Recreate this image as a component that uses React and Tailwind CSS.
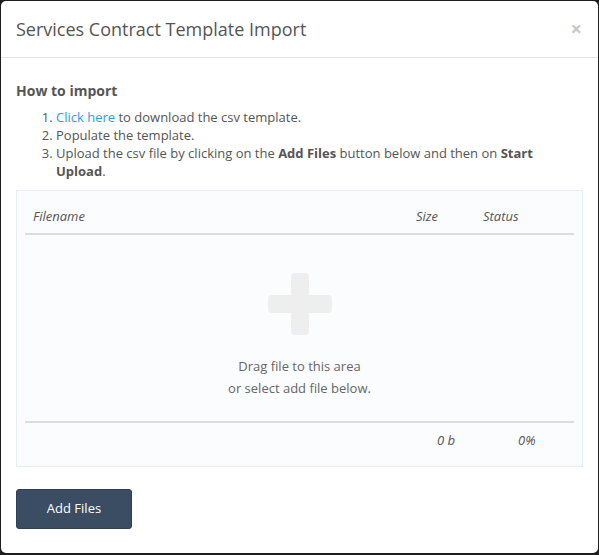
import React from 'react';

const FONT = { fontFamily: '"Open Sans", "Liberation Sans", sans-serif' };

function PlusGlyph() {
  return (
    <svg width="64" height="62" viewBox="0 0 64 62" className="block">
      <rect x="23" y="0" width="18" height="62" rx="4" fill="#eeeeee" />
      <rect x="0" y="22" width="64" height="18" rx="4" fill="#eeeeee" />
    </svg>
  );
}

export default function App() {
  return (
    <div className="h-[555px] w-[599px] bg-[#1e1e1e] pb-[2px] pl-[1px] pr-[1px] pt-[1px]" style={FONT}>
      <div className="flex h-full flex-col rounded-[5px] bg-white">
        {/* header */}
        <div className="flex h-[57px] items-center justify-between border-b border-[#e5e5e5] px-[15px]">
          <h3 className="text-[18px] leading-[26px] text-[#555]">Services Contract Template Import</h3>
          <button className="mr-[1px] text-[20px] font-bold leading-none text-[#c8c8c8]">×</button>
        </div>

        {/* body */}
        <div className="px-[15px] pt-[15px]">
          <h4 className="mt-[8px] text-[14px] font-bold leading-[20px] text-[#555]">How to import</h4>
          <ol className="mt-[7px] list-decimal pl-[40px] text-[13px] leading-[18px] text-[#555]">
            <li>
              <a className="text-[#2a9fd6]">Click here</a> to download the csv template.
            </li>
            <li>Populate the template.</li>
            <li>
              Upload the csv file by clicking on the <b className="font-bold">Add Files</b> button below and then on{' '}
              <b className="font-bold">Start Upload</b>.
            </li>
          </ol>

          {/* upload box */}
          <div className="mt-[10px] border border-[#e3eef8] bg-[#fbfcfd] px-[8px]">
            <div className="grid grid-cols-[1fr_67px_91px] border-b-2 border-[#dddddd] pb-[8px] pt-[16px] text-[13px] italic leading-[18px] text-[#555]">
              <span className="pl-[8px]">Filename</span>
              <span>Size</span>
              <span>Status</span>
            </div>

            <div className="flex flex-col items-center pb-[22px] pt-[38px] text-[13px] text-[#666]">
              <PlusGlyph />
              <p className="mt-[20px] leading-[22px]">Drag file to this area</p>
              <p className="leading-[22px]">or select add file below.</p>
            </div>

            <div className="grid grid-cols-[1fr_67px_91px] border-t-2 border-[#dddddd] pb-[17px] pt-[8px] text-[13px] italic leading-[18px] text-[#555]">
              <span />
              <span className="pl-[21px]">0 b</span>
              <span className="pl-[35px]">0%</span>
            </div>
          </div>

          <button className="mt-[22px] h-[40px] w-[116px] rounded-[3px] border border-[#2f4054] bg-[#3a4d63] text-[13px] text-white">
            Add Files
          </button>
        </div>
      </div>
    </div>
  );
}
